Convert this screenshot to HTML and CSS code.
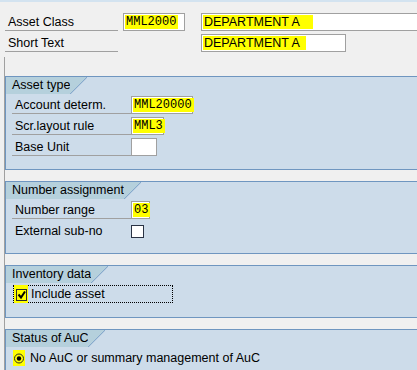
FILE: index.html
```html
<!DOCTYPE html>
<html lang="en">
<head>
    <meta charset="UTF-8">
    <title>Asset Class</title>
    <link rel="stylesheet" href="styles.css">
</head>
<body>
    <div class="top-line"></div>

    <!-- Шапка: класс и краткий текст -->
    <div class="head">
        <div class="row">
            <div class="lbl lbl-head">Asset Class</div>
            <div class="field f-class"><span class="hl mono">MML2000</span></div>
            <div class="field f-desc"><span class="hl hl-desc">DEPARTMENT A</span></div>
        </div>
        <div class="row">
            <div class="lbl lbl-head">Short Text</div>
            <div class="field f-short"><span class="hl hl-short">DEPARTMENT A</span></div>
        </div>
    </div>

    <div class="content">
        <section class="group">
            <div class="tab"><span>Asset type</span></div>
            <div class="rows">
                <div class="row">
                    <div class="lbl">Account determ.</div>
                    <div class="field f-acct"><span class="hl mono">MML20000</span></div>
                </div>
                <div class="row">
                    <div class="lbl">Scr.layout rule</div>
                    <div class="field f-scr"><span class="hl mono">MML3</span></div>
                </div>
                <div class="row">
                    <div class="lbl">Base Unit</div>
                    <div class="field f-unit"></div>
                </div>
            </div>
        </section>

        <section class="group">
            <div class="tab"><span>Number assignment</span></div>
            <div class="rows">
                <div class="row">
                    <div class="lbl">Number range</div>
                    <div class="field f-nr"><span class="hl mono">03</span></div>
                </div>
                <div class="row">
                    <div class="lbl lbl-plain">External sub-no</div>
                    <span class="check"></span>
                </div>
            </div>
        </section>

        <section class="group group-inv">
            <div class="tab"><span>Inventory data</span></div>
            <div class="rows">
                <div class="row">
                    <div class="focus">
                        <svg class="mark" width="14" height="18" viewBox="0 0 14 18">
                            <rect width="14" height="18" fill="#ffff00"/>
                            <rect x="2.5" y="4.5" width="10" height="11" fill="#ffff00" stroke="#2a2a2a"/>
                            <path d="M4.5 9.5 L7 12.5 L11 6.5" stroke="#000" stroke-width="2" fill="none"/>
                        </svg>
                        Include asset
                    </div>
                </div>
            </div>
        </section>

        <section class="group">
            <div class="tab"><span>Status of AuC</span></div>
            <div class="rows">
                <div class="row radio-row">
                    <svg class="mark" width="12" height="16" viewBox="0 0 12 16">
                        <rect width="12" height="16" fill="#ffff00"/>
                        <circle cx="6" cy="8.5" r="4.5" fill="#ffff00" stroke="#2a2a2a"/>
                        <circle cx="6" cy="8.5" r="2.2" fill="#000"/>
                    </svg>
                    No AuC or summary management of AuC
                </div>
            </div>
        </section>
    </div>
</body>
</html>
```

FILE: styles.css
```css
:root {
    --bg: #f0f0f0;
    --panel: #cddcea;
    --tab: #b5d0dc;
    --panel-line: #6f96c0;
    --field-line: #a0a0a0;
    --hl: #ffff00;
}

* {
    box-sizing: border-box;
    margin: 0;
    padding: 0;
}

body {
    background: var(--bg);
    font-family: "Liberation Sans", Arial, sans-serif;
    font-size: 12.5px;
    color: #000;
    width: 417px;
    height: 370px;
    overflow: hidden;
}

.top-line {
    height: 2px;
    background: #d3e3f0;
}

/* Шапка */
.head {
    display: flex;
    flex-direction: column;
    gap: 3px;
    padding-top: 11px;
}

.row {
    display: flex;
    align-items: flex-end;
    height: 18px;
}

.lbl {
    flex-shrink: 0;
    width: 119px;
    height: 18px;
    line-height: 18px;
    padding-left: 3px;
    border-bottom: 1px solid var(--field-line);
    white-space: nowrap;
}

.lbl-head {
    width: 113px;
    margin-left: 5px;
}

.lbl-plain {
    border-bottom: none;
}

.field {
    height: 18px;
    background: #fff;
    border: 1px solid var(--field-line);
    padding: 1px;
    display: flex;
    flex-shrink: 0;
}

.hl {
    background: var(--hl);
    height: 14px;
    line-height: 15px;
    padding: 0 1px;
    white-space: nowrap;
}

.mono {
    font-family: "Liberation Mono", "Courier New", monospace;
    font-size: 12px;
    padding: 0 2px 0 1px;
}

.f-class { width: 62px; margin-left: 5px; }
.f-desc { width: 216px; margin-left: 16px; border-right: none; }
.f-short { width: 145px; margin-left: 83px; }

.hl-desc { width: 110px; }
.hl-short { width: 103px; }

/* Группы */
.content {
    margin-top: 5px;
    margin-left: 4px;
    border-left: 1px solid var(--field-line);
    padding-top: 19px;
    height: 320px;
}

.group {
    background: var(--panel);
    border: 1px solid var(--panel-line);
    border-right: none;
    margin-bottom: 11px;
}

.tab {
    display: flex;
    height: 17px;
}

.tab span {
    background: var(--tab);
    padding-left: 6px;
    line-height: 17px;
    white-space: nowrap;
}

.tab::after {
    content: "";
    width: 17px;
    height: 17px;
    background: linear-gradient(to bottom right, var(--tab) 48%, #86a9cc 50%, transparent 54%);
}

.rows {
    display: flex;
    flex-direction: column;
    gap: 3px;
    padding: 2px 0 13px 6px;
}

.group-inv .rows {
    padding-bottom: 14px;
}

.f-acct { width: 62px; }
.f-scr { width: 33px; }
.f-unit { width: 26px; }
.f-nr { width: 19px; }

.check {
    width: 13px;
    height: 13px;
    margin-bottom: 2px;
    background: #fff;
    border: 1px solid #2a3344;
}

.focus {
    display: flex;
    align-items: center;
    gap: 3px;
    width: 160px;
    height: 18px;
    margin-left: 1px;
    border: 1px dotted #000;
}

.radio-row {
    align-items: center;
    gap: 5px;
    padding-left: 1px;
}

.mark {
    flex-shrink: 0;
}
```
